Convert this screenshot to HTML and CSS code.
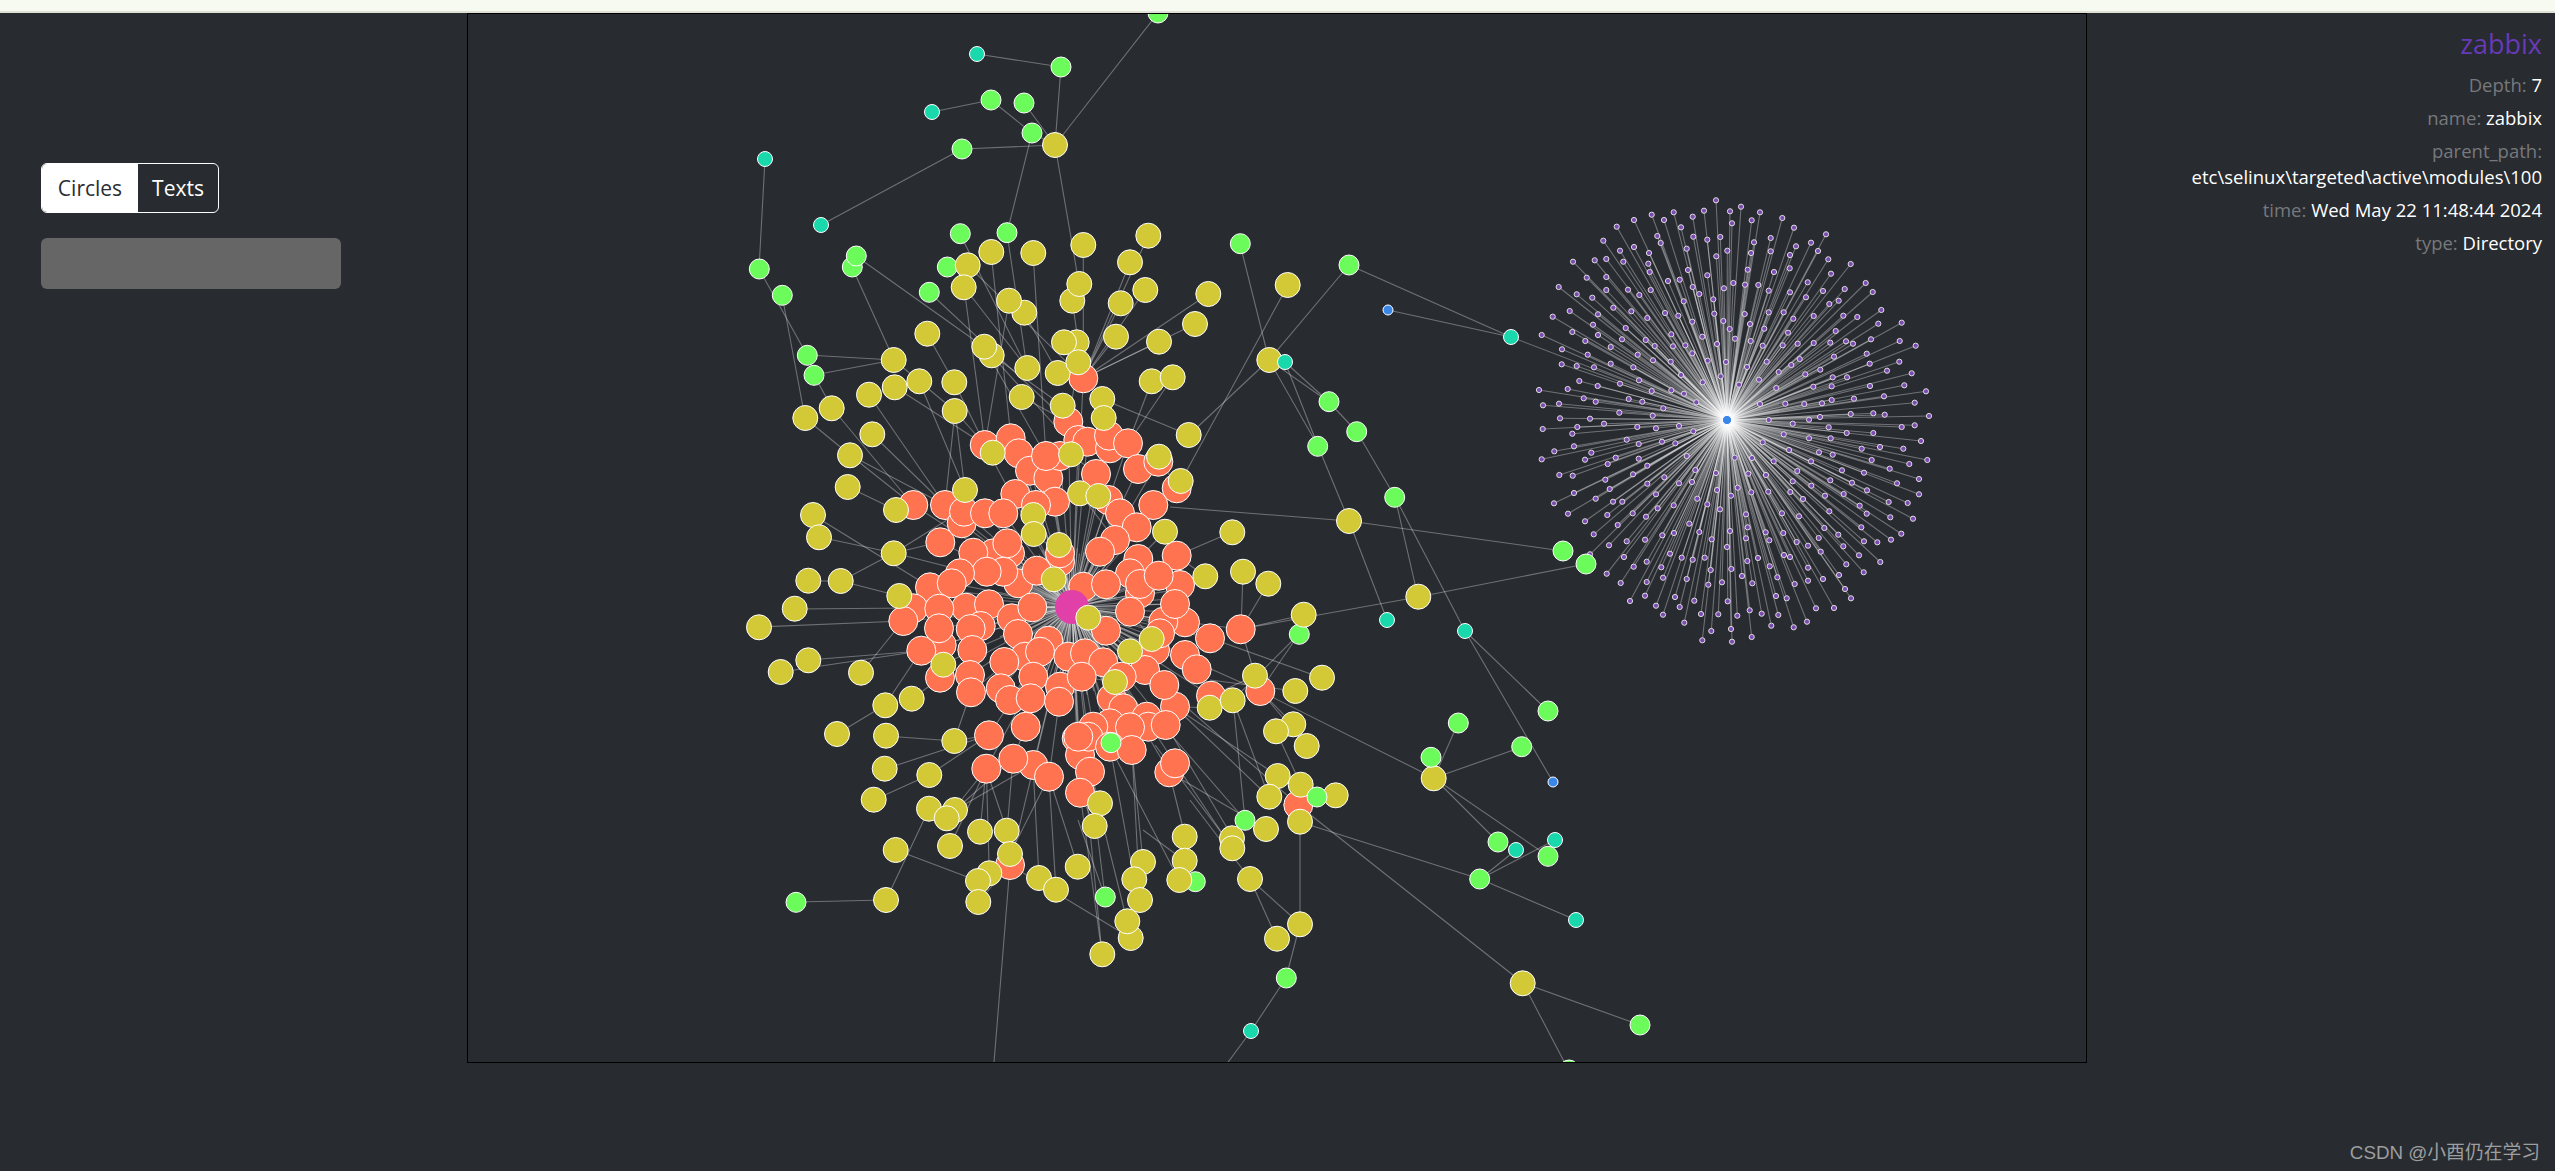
FILE: index.html
```html
<!DOCTYPE html>
<html lang="en">
<head>
<meta charset="utf-8">
<title>Directory graph</title>
<link rel="stylesheet" href="styles.css">
</head>
<body>
<div class="top-strip"></div>
<main class="layout">
  <aside class="controls">
    <div class="toggle">
      <button class="toggle-btn is-active" type="button">Circles</button>
      <button class="toggle-btn" type="button">Texts</button>
    </div>
    <div class="search-box"></div>
  </aside>
  <section class="canvas">
    <svg id="graph" class="graph" viewBox="468 14 1618 1048" xmlns="http://www.w3.org/2000/svg"></svg>
  </section>
  <aside class="details">
    <h3 class="details-title">zabbix</h3>
    <p class="field"><span class="key">Depth:</span> 7</p>
    <p class="field"><span class="key">name:</span> zabbix</p>
    <p class="field"><span class="key">parent_path:</span> etc\selinux\targeted\active\modules\100</p>
    <p class="field"><span class="key">time:</span> Wed May 22 11:48:44 2024</p>
    <p class="field"><span class="key">type:</span> Directory</p>
  </aside>
</main>
<div class="watermark">CSDN @小酉仍在学习</div>
<script src="graph.js"></script>
</body>
</html>
```
FILE: styles.css
```css
* { box-sizing: border-box; }
html, body { margin: 0; height: 100%; overflow: hidden; }
body {
  background: #282b30;
  color: #fff;
  font-family: "Open Sans", "Noto Sans CJK SC", sans-serif;
  display: flex;
  flex-direction: column;
  position: relative;
}
.top-strip {
  height: 13px;
  flex: none;
  background: #f7faf0;
  border-bottom: 2px solid #dfe1d4;
}
.layout { display: flex; align-items: flex-start; flex: 1; }
.controls { width: 467px; flex: none; padding: 150px 0 0 41px; }
.toggle {
  display: inline-flex;
  height: 50px;
  border: 1px solid #fff;
  border-radius: 6px;
  overflow: hidden;
}
.toggle-btn {
  border: 0;
  width: 80px;
  background: transparent;
  color: #fff;
  font: 21px/1 "Open Sans", sans-serif;
  padding: 0;
}
.toggle-btn.is-active { width: 96px; background: #fff; color: #2b2e33; }
.search-box {
  width: 300px;
  height: 51px;
  margin-top: 25px;
  background: #666;
  border-radius: 6px;
}
.canvas {
  width: 1620px;
  height: 1050px;
  flex: none;
  border: 1px solid #000;
}
.graph { display: block; width: 100%; height: 100%; }
.link { stroke: #fff; stroke-opacity: .33; stroke-width: 1.1; }
.node { stroke: #fff; stroke-width: 1; }
.node-orange { fill: #ff7350; }
.node-yellow { fill: #d3c936; }
.node-green { fill: #6bfb5b; }
.node-teal { fill: #19d8ab; }
.node-blue { fill: #3a87e8; }
.node-magenta { fill: #e040a8; stroke: none; }
.node-purple { fill: #7b4bb3; stroke: #ddd; stroke-width: 1; }
.details {
  flex: 1;
  min-width: 0;
  padding: 15px 13px 0 0;
  text-align: right;
  font-size: 18.5px;
  line-height: 26px;
}
.details-title {
  margin: 0 0 12px;
  font-size: 27px;
  line-height: 32px;
  font-weight: 400;
  color: #673ab7;
}
.field { margin: 0 0 7px; }
.key { color: #77797c; }
.watermark {
  position: absolute;
  right: 15px;
  bottom: 7px;
  font: 18.8px/22px "Liberation Sans", "Noto Sans CJK SC", sans-serif;
  color: #9c9e9f;
}
```
FILE: graph.js
```js
const at = (ox, oy, pts) => pts.map(([x, y]) => [ox + x / 3, oy + y / 3]);
const CENTER = [1072, 607];
const STAR = [1727, 420];

const orange = [
  ...at(740,180,[[734,795],[812,775],[836,820],[870,872],[925,895],[960,828],[918,828],[826,942],[945,965],[888,975],[985,725],[1015,780],[520,975],[615,975]]),
  ...at(1080,180,[[22,785],[10,595],[90,805],[87,767],[144,790],[48,882],[174,867],[235,845],[290,925],[220,975],[85,960]]),
  ...at(740,510,[[601,97],[665,40],[672,5],[735,10],[790,10],[810,130],[760,130],[700,128],[802,100],[835,220],[960,155],[960,130],[890,182],[790,185],[740,185],[660,190],[570,232],[635,220],[520,295],[490,333],[678,293],[747,283],[598,296],[815,325],[877,292],[722,348],[605,405],[544,422],[597,355],[692,357],[834,372],[697,420],[925,392],[855,440],[793,456],[900,425],[880,500],[985,440],[600,503],[690,495],[693,547],[782,535],[810,570],[960,530],[872,565],[957,575],[1030,230],[747,676],[857,650],[739,776],[880,765],[820,746],[927,800],[1010,685],[1020,735]]),
  ...at(1080,510,[[120,10],[170,52],[105,90],[60,125],[290,137],[175,147],[150,190],[300,225],[180,250],[180,222],[236,197],[78,223],[315,337],[250,335],[285,282],[150,305],[78,362],[390,385],[482,358],[315,435],[225,420],[240,370],[350,478],[15,430],[70,457],[195,480],[125,500],[5,500],[285,590],[253,525],[95,565],[130,595],[393,557],[541,543],[200,620],[205,650],[257,645],[90,640],[40,650],[25,680],[-5,680],[150,652],[90,710],[155,720],[268,787],[285,760],[30,785],[0,848],[655,885]]),
  ...at(740,840,[[810,75]])
];

const yellowPts = [
  [1055,145],
  ...at(740,180,[[754,216],[880,219],[683,256],[671,322],[853,398],[807,362],[562,461],[755,526],[733,500],[461,540],[538,604],[643,607],[464,622],[387,644],[644,693],[275,685],[196,714],[862,564],[953,579],[845,651],[968,677],[1010,487],[972,487],[1015,547],[997,362],[1018,312],[397,763],[330,826],[323,921],[675,930],[758,818],[993,823],[1020,940]]),
  ...at(1080,180,[[10,195],[205,167],[150,247],[196,330],[122,370],[385,342],[345,432],[108,470],[237,485],[215,604],[278,592],[623,315],[568,540],[67,657],[71,714],[326,765],[237,830],[302,903],[55,948]]),
  ...at(740,510,[[468,0],[219,15],[237,82],[461,130],[205,212],[302,213],[478,258],[164,296],[57,352],[205,451],[122,486],[363,488],[610,464],[515,566],[436,586],[291,672],[438,677],[643,693],[434,776],[568,795],[401,869],[645,900],[567,896],[620,925],[720,965],[800,962],[880,15],[881,72],[957,105],[941,208]]),
  ...at(1080,510,[[807,33],[457,67],[255,65],[376,199],[489,185],[565,221],[1015,260],[671,314],[215,387],[25,323],[150,424],[525,497],[105,516],[726,503],[646,543],[389,593],[458,571],[640,643],[588,664],[680,708],[593,798],[568,860],[767,856],[662,824],[660,935],[60,880],[44,948],[558,957],[456,985]]),
  ...at(740,840,[[467,30],[630,18],[810,42],[748,100],[714,123],[715,186],[438,180],[897,114],[948,149],[1013,80],[1209,66],[1183,118],[1200,180],[1172,294],[1162,244],[1087,343],[1334,-10],[1334,62],[1318,120]]),
  ...at(1200,640,[[97,625],[150,717],[300,853],[231,896],[968,1030],[701,415]])
];

const greenUnder = [
  ...at(740,180,[[622,261]]),
  ...at(740,840,[[1366,125]]),
  ...at(1080,510,[[658,373]])
];
const green = [
  [1158,13],[1061,67],[991,100],[1024,103],[1032,133],[962,149],
  ...at(740,180,[[58,267],[127,346],[337,261],[349,228],[661,161],[801,158],[568,337],[202,526],[222,586]]),
  ...at(1080,180,[[481,191],[807,255],[747,665],[830,755],[713,799],[944,952]]),
  ...at(1080,510,[[93,698],[711,861],[495,931]]),
  ...at(740,840,[[168,187],[1096,171]]),
  ...at(1200,640,[[775,249],[693,352],[965,320],[1044,213],[894,606],[1044,649],[839,717],[259,1014],[1320,1155],[1107,1290]]),
  [1563,551],[1586,564]
];
const teal = [[977,54],[932,112],[765,159],[821,225],[1285,362],[1387,620],[1465,631],[1511,337],[1516,850],[1555,840],[1576,920],[1251,1031]];
const blue = [[1388,310],[1553,782],[1727,420]];

const purple = at(1500,180,[[648,61],[723,80],[690,94],[780,97],[612,92],[521,97],[455,104],[578,110],[402,120],[492,120],[755,121],[847,114],[696,130],[882,143],[543,142],[350,140],[472,168],[580,170],[622,179],[661,171],[812,174],[978,163],[933,188],[762,187],[310,182],[482,189],[888,199],[402,201],[560,206],[360,212],[447,219],[682,212],[753,219],[812,214],[954,213],[870,225],[649,229],[284,241],[319,237],[219,245],[370,245],[445,251],[985,238],[1052,252],[743,269],[869,265],[564,270],[822,276],[449,276],[993,281],[622,286],[260,293],[319,291],[539,299],[504,303],[700,309],[735,314],[775,315],[923,307],[1097,309],[176,321],[672,325],[578,321],[319,330],[384,329],[452,330],[806,332],[870,337],[969,333],[1034,327],[1118,336],[230,343],[418,345],[598,342],[277,353],[918,352],[640,358],[551,364],[1016,362],[988,372],[340,383],[1144,390],[209,393],[394,394],[495,399],[535,407],[643,401],[734,402],[806,397],[851,397],[158,410],[294,403],[442,414],[880,416],[941,408],[1030,407],[1072,411],[670,423],[577,425],[750,432],[1135,431],[1205,428],[279,434],[377,444],[689,447],[793,446],[217,456],[514,463],[864,458],[1007,453],[294,465],[125,465],[607,470],[705,476],[366,478],[437,480],[752,483],[1113,478],[1038,484],[1059,491],[991,488],[941,489],[1199,483],[256,483],[651,492],[464,498],[519,499],[556,496],[788,497],[848,496],[893,491],[1247,497],[332,501],[186,508],[577,520],[263,524],[413,524],[1100,521],[1002,530],[899,537],[459,541],[512,545],[623,542],[678,546],[800,545],[874,555],[185,553],[230,558],[282,562],[332,551],[400,562],[741,561],[1109,551],[1198,545],[961,569],[1161,572],[836,576],[1235,580],[543,585],[662,589],[916,583],[998,592],[1041,592],[238,603],[417,601],[777,599],[360,611],[293,618],[608,607],[717,614],[1213,616],[1110,618],[995,619],[940,620],[829,624],[203,627],[117,630],[514,631],[455,633],[552,641],[1278,634],[251,655],[386,657],[1152,649],[1062,656],[995,660],[287,665],[427,665],[589,667],[1244,668],[780,672],[856,671],[913,672],[966,670],[177,671],[129,676],[490,685],[358,698],[1052,702],[1120,700],[1154,704],[1287,708],[458,707],[960,711],[180,715],[270,716],[927,719],[806,720],[312,731],[878,731],[232,741],[412,741],[537,738],[468,745],[128,747],[1205,741],[1244,736],[986,742],[580,754],[217,761],[851,763],[1040,759],[1120,759],[380,779],[927,775],[992,775],[486,785],[788,787],[1263,783],[416,792],[526,790],[222,799],[1085,806],[1140,801],[1210,806],[163,814],[867,810],[957,817],[998,824],[274,818],[125,838],[560,828],[704,833],[756,834],[347,833],[416,836],[255,839],[821,844],[933,844],[1115,840],[1282,840],[1228,852],[323,852],[442,857],[586,870],[1169,866],[892,873],[1026,871],[1092,878],[648,879],[745,881],[178,885],[218,887],[399,883],[798,885],[493,892],[316,899],[1257,897],[576,906],[537,910],[442,911],[878,904],[991,901],[1056,908],[1191,910],[934,917],[713,923],[329,927],[651,930],[805,935],[754,937],[871,936],[1101,931],[222,939],[468,943],[693,947],[975,947],[1031,942],[1257,943],[287,956],[592,956],[909,957],[339,965],[367,965],[1166,966],[1223,969],[162,970],[622,973],[521,976],[1079,977],[473,985],[660,988],[204,1001],[398,1000],[846,1000],[988,994],[1100,1001],[738,1003],[322,1005],[438,1010],[897,1009],[1171,1012],[1239,1016],[255,1024],[568,1031],[353,1035],[743,1042],[973,1044],[1084,1042],[598,1056],[690,1053],[522,1059],[797,1057],[850,1059],[1015,1064],[281,1063],[1204,1061],[487,1066],[956,1074],[635,1078],[738,1075],[808,1081],[435,1079],[380,1084],[1092,1084],[1173,1079],[1132,1087],[890,1086],[327,1096],[924,1097],[1030,1099],[681,1101],[962,1115],[510,1121],[270,1123],[852,1125],[870,1131],[372,1131],[1077,1126],[545,1133],[578,1139],[614,1133],[774,1134],[742,1143],[440,1145],[1141,1146],[1039,1153],[401,1160],[809,1159],[484,1162],[694,1167],[924,1163],[632,1170],[1091,1177],[320,1181],[1017,1185],[726,1188],[489,1193],[832,1192],[560,1197],[969,1197],[924,1202],[362,1209],[440,1206],[666,1207],[757,1210],[884,1212],[625,1214],[1035,1227],[828,1248],[435,1247],[525,1251],[860,1255],[1053,1255],[390,1263],[583,1262],[683,1264],[468,1277],[539,1281],[948,1285],[1002,1284],[749,1291],[603,1302],[655,1303],[785,1301],[489,1304],[712,1307],[835,1305],[921,1325],[553,1328],[814,1337],[881,1342],[693,1347],[634,1353],[755,1371],[607,1381],[696,1385]]);

const explicit = [
  [977,54,1061,67],[1061,67,1055,145],[1158,13,1055,145],[932,112,991,100],[991,100,1032,133],[1024,103,1055,145],[1032,133,1055,145],[962,149,1055,145],[962,149,821,225],[1032,133,1007,233],[765,159,759,269],[1055,145,1079,284],
  [759,269,807,355],[782,295,805,418],[856,256,984,347],[984,347,1068,440],[852,267,894,360],[807,355,894,360],[814,375,894,360],[814,375,832,408],
  [960,234,1027,368],[1007,233,1027,368],[991,252,1011,438],[1033,253,1046,456],[964,287,985,445],[964,287,1027,368],[929,292,1068,422],[1009,301,985,445],[1024,313,1058,373],[984,347,1046,456],[992,355,1063,406],
  [927,334,954,382],[954,382,985,445],[894,360,955,411],[955,411,985,445],[919,381,965,490],[895,387,985,445],[869,395,945,505],[872,434,945,505],[850,455,945,505],[850,455,913,505],[832,408,913,505],[805,418,850,455],[848,487,896,510],[955,411,945,505],[955,411,965,490],[1022,397,1068,422],
  [813,515,930,587],[819,537,894,553],[894,553,953,568],[894,553,940,542],[894,553,947,520],[808,581,841,581],[841,581,894,553],[841,581,899,596],[795,609,913,608],[759,627,903,621],[808,660,921,651],[781,672,921,651],[861,673,903,621],[912,699,940,678],[885,705,921,651],[837,734,885,705],[886,736,954,741],[954,741,971,692],[954,741,989,735],[885,769,989,735],[929,775,989,735],[874,800,929,775],
  [955,810,1013,759],[955,810,1033,765],[947,818,986,769],[980,832,986,769],[1007,831,986,769],[1007,831,1013,759],[1039,878,1033,765],[1056,890,1049,777],[1078,867,1049,777],[896,850,978,881],[886,900,929,809],[796,902,886,900],[1010,865,993,1075],[1102,954,1087,800],[1105,897,1078,820],
  [1110,747,1134,879],[1132,750,1140,900],[1090,772,1127,921],[1110,747,1179,880],[1080,793,1102,954],[1090,772,1105,897],[1132,750,1143,862],[1143,830,1185,861],[1169,772,1185,836],[1175,763,1232,848],[1173,737,1245,820],[1166,725,1233,838],[1175,707,1278,776],[1175,707,1269,797],[1233,700,1269,797],[1245,820,1233,700],
  [1232,532,1176,556],[1241,629,1418,597],[1241,629,1243,572],[1241,629,1268,584],[1299,634,1260,691],[1299,634,1233,700],[1241,629,1260,691],[1210,638,1322,678],[1295,691,1210,680],
  [1269,360,1240,244],[1269,360,1349,265],[1349,265,1511,337],[1388,310,1511,337],[1269,360,1318,446],[1285,362,1329,402],[1285,362,1318,446],[1269,360,1329,402],[1329,402,1357,432],[1357,432,1395,497],[1318,446,1349,521],[1288,285,1181,481],[1269,360,1189,435],[1102,399,1189,435],
  [1349,521,1387,620],[1349,521,1170,507],[1349,521,1563,551],[1418,597,1586,564],[1395,497,1418,597],[1395,497,1465,631],[1465,631,1548,711],[1465,631,1553,782],
  [1434,778,1458,723],[1434,778,1431,757],[1434,778,1522,747],[1434,778,1498,842],[1434,778,1548,856],[1434,778,1260,691],
  [1480,879,1516,850],[1480,879,1555,840],[1480,879,1576,920],[1480,879,1300,822],[1523,983,1640,1025],[1523,983,1569,1071],[1523,983,1298,805],
  [1300,924,1250,879],[1300,924,1300,822],[1277,939,1250,879],[1286,978,1300,924],[1286,978,1251,1031],[1251,1031,1215,1080],
  [1276,731,1301,785],[1250,879,1190,800],[1233,848,1155,745],
  [1511,337,1727,420]
];

const svg = document.getElementById('graph');
const NS = 'http://www.w3.org/2000/svg';
const add = (name, attrs) => {
  const el = document.createElementNS(NS, name);
  for (const k in attrs) el.setAttribute(k, attrs[k]);
  svg.appendChild(el);
};
const link = (a, b, c, d) => add('line', { class: 'link', x1: a.toFixed(1), y1: b.toFixed(1), x2: c.toFixed(1), y2: d.toFixed(1) });
const dist = (p, x, y) => Math.hypot(p[0] - x, p[1] - y);

purple.forEach(p => link(STAR[0], STAR[1], p[0], p[1]));
orange.forEach(p => link(CENTER[0], CENTER[1], p[0], p[1]));
for (let i = 0; i < 90; i++) {
  const angle = i * 2.39996;
  const len = 45 + (i * 37 % 60);
  link(CENTER[0], CENTER[1], CENTER[0] + Math.cos(angle) * len, CENTER[1] + Math.sin(angle) * len);
}
explicit.forEach(l => link(l[0], l[1], l[2], l[3]));

const linked = p => explicit.some(l => dist(p, l[0], l[1]) < 6 || dist(p, l[2], l[3]) < 6);
yellowPts.filter(p => !linked(p)).forEach(p => {
  const own = dist(p, CENTER[0], CENTER[1]);
  let best = null, bestD = Infinity;
  orange.forEach(o => {
    if (dist(o, CENTER[0], CENTER[1]) < own - 10) {
      const d = dist(p, o[0], o[1]);
      if (d < bestD && d > 30) { bestD = d; best = o; }
    }
  });
  if (best) link(p[0], p[1], best[0], best[1]);
});

const dots = (list, r, cls) => list.forEach(p => add('circle', { class: 'node ' + cls, cx: p[0].toFixed(1), cy: p[1].toFixed(1), r }));
dots(orange, 14.5, 'node-orange');
dots([CENTER], 17, 'node-magenta');
dots(greenUnder, 10, 'node-green');
dots(yellowPts, 12.5, 'node-yellow');
dots(purple, 2.6, 'node-purple');
dots(green, 10, 'node-green');
dots(teal, 7.5, 'node-teal');
dots(blue.slice(0, 2), 5, 'node-blue');
dots(blue.slice(2), 4.6, 'node-blue');
```
